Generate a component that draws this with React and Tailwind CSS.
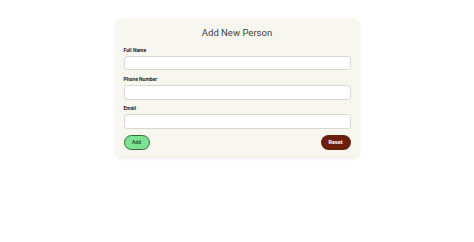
export default function App() {
  const font = { fontFamily: 'Roboto, "Noto Sans", sans-serif' };
  return (
    <div className="w-[474px] h-[242px] bg-white flex justify-center" style={font}>
      <div className="mt-[19px] w-[243px] h-[138px] bg-[#f7f7ef] rounded-[6px] shadow-[0_1px_4px_rgba(0,0,0,0.1)] px-[8px] pt-[6px] flex flex-col">
        <h2 className="text-center text-[9.5px] leading-[16px] text-[#3c3c3c]">Add New Person</h2>
        <label className="mt-[5px] text-[5px] leading-[8px] font-bold text-[#222]">Full Name</label>
        <div className="mt-[2px] h-[14px] bg-white border border-[#d8d8d2] rounded-[3px]"></div>
        <label className="mt-[5px] text-[5px] leading-[8px] font-bold text-[#222]">Phone Number</label>
        <div className="mt-[2px] h-[15px] bg-white border border-[#d8d8d2] rounded-[3px]"></div>
        <label className="mt-[4px] text-[5px] leading-[8px] font-bold text-[#222]">Email</label>
        <div className="mt-[2px] h-[15px] bg-white border border-[#d8d8d2] rounded-[3px]"></div>
        <div className="mt-[6px] flex justify-between">
          <button className="w-[26px] h-[15px] rounded-full bg-[#7de394] border border-[#2f6b3c] text-[5px] font-bold text-[#2a5a34] flex items-center justify-center">Add</button>
          <button className="w-[30px] h-[15px] rounded-full bg-[#6b1f0a] text-[5.5px] font-bold text-white flex items-center justify-center">Reset</button>
        </div>
      </div>
    </div>
  );
}
